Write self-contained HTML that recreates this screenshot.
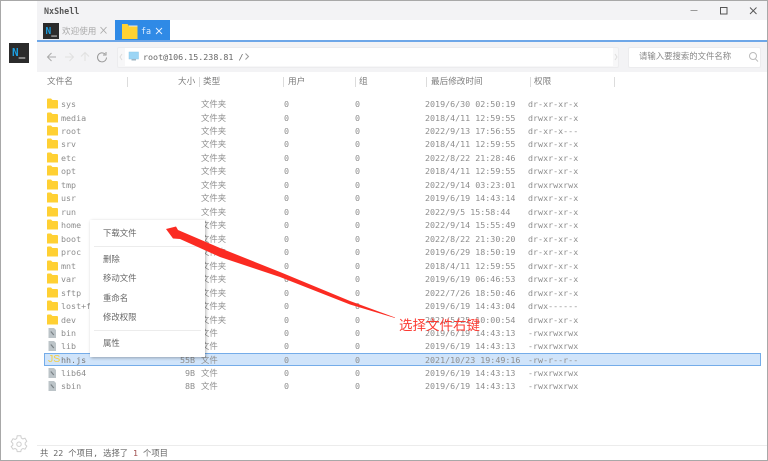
<!DOCTYPE html>
<html><head><meta charset="utf-8">
<style>
html,body{margin:0;padding:0;background:#fff}
#w{position:relative;width:768px;height:461px;overflow:hidden;background:#fff;font-family:"DejaVu Sans Mono","Liberation Mono","Noto Sans CJK SC",monospace;color:#8d8d8d;filter:blur(.3px)}
#w div,#w span.a{position:absolute;white-space:nowrap}
.t{font-size:8.35px;line-height:12px;height:12px}
.c{font-family:"Liberation Sans","Noto Sans CJK SC",sans-serif;font-size:8.4px;line-height:12px;height:12px;color:#8f8f8f}
.h{font-family:"Liberation Sans","Noto Sans CJK SC",sans-serif;font-size:8.6px;line-height:12px;color:#7d7d7d;top:75px}
.s{width:1px;height:10px;top:77px;background:#dcdcdc}
.m{font-family:"Liberation Sans","Noto Sans CJK SC",sans-serif;font-size:8.4px;line-height:12px;left:103px;color:#666}
svg{position:absolute;overflow:visible}
</style></head><body>
<div id="w">
<div style="left:37px;top:1px;width:730px;height:19px;background:#f3f3f5"></div>
<div style="left:44px;top:5px;font-size:8.4px;line-height:12px;color:#555;font-weight:bold">NxShell</div>
<!-- window buttons -->
<svg style="left:0;top:0" width="768" height="40"><path d="M690.5 10.5h7" stroke="#999" stroke-width="1"/><rect x="720.5" y="7.5" width="6.5" height="6.5" fill="none" stroke="#555"/><path d="M750 7.5l6.5 6.5M756.5 7.5l-6.5 6.5" stroke="#555" stroke-width=".9"/></svg>
<!-- tabs -->
<div style="left:37px;top:20px;width:78px;height:20px;background:#f3f3f5"></div>
<div style="left:43px;top:23px;width:16px;height:16px;background:#2b2b2b"></div>
<div style="left:45.5px;top:26px;font-size:9.5px;line-height:12px;color:#1d9fe0;font-weight:bold">N<span style="color:#ddd">_</span></div>
<div class="c" style="left:62px;top:25px;color:#aaa;font-size:8.6px">欢迎使用</div>
<svg style="left:0;top:0" width="768" height="45"><path d="M100.5 27l6 6.5M106.5 27l-6 6.5" stroke="#aaa" stroke-width=".9" fill="none"/></svg>
<div style="left:115px;top:20px;width:55px;height:20px;background:#2f8ae6"></div>
<svg style="left:121px;top:23px" width="17" height="17"><path d="M1 1h5.5l1.5 2h8.500v13H1z" fill="#ffd233"/><path d="M8 3h8.500" stroke="#e8e8e8" stroke-width="1"/></svg>
<div style="left:141px;top:25px;font-size:8.4px;line-height:12px;color:#dfeeff">fa</div>
<svg style="left:0;top:0" width="768" height="45"><path d="M156 28l6 6M162 28l-6 6" stroke="#e8f2ff" stroke-width=".9" fill="none"/></svg>
<div style="left:37px;top:40px;width:730px;height:2px;background:#6ea7e8"></div>
<!-- sidebar logo -->
<div style="left:9px;top:43px;width:20px;height:20px;background:#2b2b2b"></div>
<div style="left:12px;top:46px;font-size:11px;line-height:14px;color:#1d9fe0;font-weight:bold">N<span style="color:#ddd">_</span></div>
<!-- toolbar -->
<div style="left:37px;top:42px;width:730px;height:30px;background:#f3f3f5"></div>
<svg style="left:0;top:0" width="768" height="72"><g fill="none" stroke-width="1">
<path d="M56 57h-8M51.500 53l-4 4 4 4" stroke="#aaa"/>
<path d="M65 57h8M69.500 53l4 4-4 4" stroke="#e0e0e0"/>
<path d="M85 61v-8M81 56.500l4-4 4 4" stroke="#e0e0e0"/>
<path d="M105 54a4.500 4.500 0 1 0 1.500 3.500M106 52v3h-3" stroke="#999"/>
</g></svg>
<div style="left:117px;top:47px;width:500px;height:19px;background:#f7f7f8;border:1px solid #ececee;border-radius:2px"></div>
<div style="left:125px;top:48px;width:488px;height:18px;background:#fff"></div>
<svg style="left:0;top:0" width="768" height="72"><path d="M122 54l-2 3 2 3" fill="none" stroke="#ddd"/><path d="M615 54l2 3-2 3" fill="none" stroke="#ddd"/></svg>
<div style="left:628px;top:47px;width:131px;height:19px;background:#fff;border:1px solid #ececee;border-radius:2px"></div>
<svg style="left:0;top:0" width="768" height="72"><circle cx="753" cy="56" r="3.500" fill="none" stroke="#bbb"/><path d="M755.500 59l2.500 2.500" stroke="#bbb"/></svg>
<svg style="left:128px;top:51px" width="13" height="12"><rect x="1" y="1" width="9.500" height="7" fill="#9bd5f5" stroke="#8cc7e8" stroke-width=".5"/><rect x="3.500" y="8" width="4.500" height="1.500" fill="#9fb4c2"/></svg>
<div style="left:143px;top:51px;font-size:8.35px;line-height:12px;color:#666">root@106.15.238.81 /</div>
<svg style="left:0;top:0" width="768" height="72"><path d="M245.500 53.500l3 3-3 3" fill="none" stroke="#999"/></svg>
<div class="c" style="left:639px;top:50px;font-size:8.4px;color:#888">请输入要搜索的文件名称</div>
<!-- header -->
<div class="h" style="left:47px">文件名</div>
<div class="s" style="left:127px"></div>
<div class="h" style="left:178px">大小</div>
<div class="s" style="left:199px"></div>
<div class="h" style="left:203px">类型</div>
<div class="s" style="left:283px"></div>
<div class="h" style="left:288px">用户</div>
<div class="s" style="left:355px"></div>
<div class="h" style="left:359px">组</div>
<div class="s" style="left:426px"></div>
<div class="h" style="left:431px">最后修改时间</div>
<div class="s" style="left:530px"></div>
<div class="h" style="left:534px">权限</div>
<div class="s" style="left:614px"></div>
<!-- selected -->
<div style="left:44px;top:353px;width:715px;height:11px;background:#d0e4fa;border:1px solid #74ace9"></div>
<!-- rows -->
<svg style="left:47px;top:98px" width="13" height="12"><use href="#f"/></svg>
<div class="t" style="left:61px;top:98px">sys</div><div class="c" style="left:201px;top:98px">文件夹</div><div class="t" style="left:284px;top:98px">0</div><div class="t" style="left:355px;top:98px">0</div><div class="t" style="left:425px;top:98px">2019/6/30 02:50:19</div><div class="t" style="left:528px;top:98px">dr-xr-xr-x</div>
<svg style="left:47px;top:111.500px" width="13" height="12"><use href="#f"/></svg>
<div class="t" style="left:61px;top:111.500px">media</div><div class="c" style="left:201px;top:111.500px">文件夹</div><div class="t" style="left:284px;top:111.500px">0</div><div class="t" style="left:355px;top:111.500px">0</div><div class="t" style="left:425px;top:111.500px">2018/4/11 12:59:55</div><div class="t" style="left:528px;top:111.500px">drwxr-xr-x</div>
<svg style="left:47px;top:125px" width="13" height="12"><use href="#f"/></svg>
<div class="t" style="left:61px;top:125px">root</div><div class="c" style="left:201px;top:125px">文件夹</div><div class="t" style="left:284px;top:125px">0</div><div class="t" style="left:355px;top:125px">0</div><div class="t" style="left:425px;top:125px">2022/9/13 17:56:55</div><div class="t" style="left:528px;top:125px">dr-xr-x---</div>
<svg style="left:47px;top:138px" width="13" height="12"><use href="#f"/></svg>
<div class="t" style="left:61px;top:138px">srv</div><div class="c" style="left:201px;top:138px">文件夹</div><div class="t" style="left:284px;top:138px">0</div><div class="t" style="left:355px;top:138px">0</div><div class="t" style="left:425px;top:138px">2018/4/11 12:59:55</div><div class="t" style="left:528px;top:138px">drwxr-xr-x</div>
<svg style="left:47px;top:152px" width="13" height="12"><use href="#f"/></svg>
<div class="t" style="left:61px;top:152px">etc</div><div class="c" style="left:201px;top:152px">文件夹</div><div class="t" style="left:284px;top:152px">0</div><div class="t" style="left:355px;top:152px">0</div><div class="t" style="left:425px;top:152px">2022/8/22 21:28:46</div><div class="t" style="left:528px;top:152px">drwxr-xr-x</div>
<svg style="left:47px;top:165px" width="13" height="12"><use href="#f"/></svg>
<div class="t" style="left:61px;top:165px">opt</div><div class="c" style="left:201px;top:165px">文件夹</div><div class="t" style="left:284px;top:165px">0</div><div class="t" style="left:355px;top:165px">0</div><div class="t" style="left:425px;top:165px">2018/4/11 12:59:55</div><div class="t" style="left:528px;top:165px">drwxr-xr-x</div>
<svg style="left:47px;top:179px" width="13" height="12"><use href="#f"/></svg>
<div class="t" style="left:61px;top:179px">tmp</div><div class="c" style="left:201px;top:179px">文件夹</div><div class="t" style="left:284px;top:179px">0</div><div class="t" style="left:355px;top:179px">0</div><div class="t" style="left:425px;top:179px">2022/9/14 03:23:01</div><div class="t" style="left:528px;top:179px">drwxrwxrwx</div>
<svg style="left:47px;top:192px" width="13" height="12"><use href="#f"/></svg>
<div class="t" style="left:61px;top:192px">usr</div><div class="c" style="left:201px;top:192px">文件夹</div><div class="t" style="left:284px;top:192px">0</div><div class="t" style="left:355px;top:192px">0</div><div class="t" style="left:425px;top:192px">2019/6/19 14:43:14</div><div class="t" style="left:528px;top:192px">drwxr-xr-x</div>
<svg style="left:47px;top:206px" width="13" height="12"><use href="#f"/></svg>
<div class="t" style="left:61px;top:206px">run</div><div class="c" style="left:201px;top:206px">文件夹</div><div class="t" style="left:284px;top:206px">0</div><div class="t" style="left:355px;top:206px">0</div><div class="t" style="left:425px;top:206px">2022/9/5 15:58:44</div><div class="t" style="left:528px;top:206px">drwxr-xr-x</div>
<svg style="left:47px;top:219px" width="13" height="12"><use href="#f"/></svg>
<div class="t" style="left:61px;top:219px">home</div><div class="c" style="left:201px;top:219px">文件夹</div><div class="t" style="left:284px;top:219px">0</div><div class="t" style="left:355px;top:219px">0</div><div class="t" style="left:425px;top:219px">2022/9/14 15:55:49</div><div class="t" style="left:528px;top:219px">drwxr-xr-x</div>
<svg style="left:47px;top:233px" width="13" height="12"><use href="#f"/></svg>
<div class="t" style="left:61px;top:233px">boot</div><div class="c" style="left:201px;top:233px">文件夹</div><div class="t" style="left:284px;top:233px">0</div><div class="t" style="left:355px;top:233px">0</div><div class="t" style="left:425px;top:233px">2022/8/22 21:30:20</div><div class="t" style="left:528px;top:233px">dr-xr-xr-x</div>
<svg style="left:47px;top:246px" width="13" height="12"><use href="#f"/></svg>
<div class="t" style="left:61px;top:246px">proc</div><div class="c" style="left:201px;top:246px">文件夹</div><div class="t" style="left:284px;top:246px">0</div><div class="t" style="left:355px;top:246px">0</div><div class="t" style="left:425px;top:246px">2019/6/29 18:50:19</div><div class="t" style="left:528px;top:246px">dr-xr-xr-x</div>
<svg style="left:47px;top:260px" width="13" height="12"><use href="#f"/></svg>
<div class="t" style="left:61px;top:260px">mnt</div><div class="c" style="left:201px;top:260px">文件夹</div><div class="t" style="left:284px;top:260px">0</div><div class="t" style="left:355px;top:260px">0</div><div class="t" style="left:425px;top:260px">2018/4/11 12:59:55</div><div class="t" style="left:528px;top:260px">drwxr-xr-x</div>
<svg style="left:47px;top:273px" width="13" height="12"><use href="#f"/></svg>
<div class="t" style="left:61px;top:273px">var</div><div class="c" style="left:201px;top:273px">文件夹</div><div class="t" style="left:284px;top:273px">0</div><div class="t" style="left:355px;top:273px">0</div><div class="t" style="left:425px;top:273px">2019/6/19 06:46:53</div><div class="t" style="left:528px;top:273px">drwxr-xr-x</div>
<svg style="left:47px;top:286.500px" width="13" height="12"><use href="#f"/></svg>
<div class="t" style="left:61px;top:286.500px">sftp</div><div class="c" style="left:201px;top:286.500px">文件夹</div><div class="t" style="left:284px;top:286.500px">0</div><div class="t" style="left:355px;top:286.500px">0</div><div class="t" style="left:425px;top:286.500px">2022/7/26 18:50:46</div><div class="t" style="left:528px;top:286.500px">drwxr-xr-x</div>
<svg style="left:47px;top:300px" width="13" height="12"><use href="#f"/></svg>
<div class="t" style="left:61px;top:300px">lost+found</div><div class="c" style="left:201px;top:300px">文件夹</div><div class="t" style="left:284px;top:300px">0</div><div class="t" style="left:355px;top:300px">0</div><div class="t" style="left:425px;top:300px">2019/6/19 14:43:04</div><div class="t" style="left:528px;top:300px">drwx------</div>
<svg style="left:47px;top:313.500px" width="13" height="12"><use href="#f"/></svg>
<div class="t" style="left:61px;top:313.500px">dev</div><div class="c" style="left:201px;top:313.500px">文件夹</div><div class="t" style="left:284px;top:313.500px">0</div><div class="t" style="left:355px;top:313.500px">0</div><div class="t" style="left:425px;top:313.500px">2021/5/25 10:00:54</div><div class="t" style="left:528px;top:313.500px">drwxr-xr-x</div>
<svg style="left:47px;top:327px" width="13" height="12"><use href="#g"/></svg>
<div class="t" style="left:61px;top:327px">bin</div><div class="c" style="left:201px;top:327px">文件</div><div class="t" style="left:284px;top:327px">0</div><div class="t" style="left:355px;top:327px">0</div><div class="t" style="left:425px;top:327px">2019/6/19 14:43:13</div><div class="t" style="left:528px;top:327px">-rwxrwxrwx</div>
<svg style="left:47px;top:340px" width="13" height="12"><use href="#g"/></svg>
<div class="t" style="left:61px;top:340px">lib</div><div class="c" style="left:201px;top:340px">文件</div><div class="t" style="left:284px;top:340px">0</div><div class="t" style="left:355px;top:340px">0</div><div class="t" style="left:425px;top:340px">2019/6/19 14:43:13</div><div class="t" style="left:528px;top:340px">-rwxrwxrwx</div>
<div style="left:48px;top:354px;font-family:'Liberation Sans',sans-serif;font-size:10.500px;line-height:11px;height:11px;color:#f6cf3c">JS</div>
<div class="t" style="left:61px;top:353.500px;color:#777">hh.js</div><div class="t" style="left:180px;top:353.500px">55B</div><div class="c" style="left:201px;top:353.500px">文件</div><div class="t" style="left:284px;top:353.500px">0</div><div class="t" style="left:355px;top:353.500px">0</div><div class="t" style="left:425px;top:353.500px">2021/10/23 19:49:16</div><div class="t" style="left:528px;top:353.500px">-rw-r--r--</div>
<svg style="left:47px;top:367px" width="13" height="12"><use href="#g"/></svg>
<div class="t" style="left:61px;top:367px">lib64</div><div class="t" style="left:185px;top:367px">9B</div><div class="c" style="left:201px;top:367px">文件</div><div class="t" style="left:284px;top:367px">0</div><div class="t" style="left:355px;top:367px">0</div><div class="t" style="left:425px;top:367px">2019/6/19 14:43:13</div><div class="t" style="left:528px;top:367px">-rwxrwxrwx</div>
<svg style="left:47px;top:380px" width="13" height="12"><use href="#g"/></svg>
<div class="t" style="left:61px;top:380px">sbin</div><div class="t" style="left:185px;top:380px">8B</div><div class="c" style="left:201px;top:380px">文件</div><div class="t" style="left:284px;top:380px">0</div><div class="t" style="left:355px;top:380px">0</div><div class="t" style="left:425px;top:380px">2019/6/19 14:43:13</div><div class="t" style="left:528px;top:380px">-rwxrwxrwx</div>
<svg width="0" height="0" style="left:0;top:0"><defs>
<g id="f"><path d="M0 1.500q0-1 1-1h3l1.500 1.500h4.500q1 0 1 1v7.500H0z" fill="#ffd033"/></g>
<g id="g"><path d="M1.500 1h5.500l2 2v8H1.500z" fill="#bcc4c8"/><path d="M3.800 4.500l3 3.500" stroke="#7a8287" stroke-width="1.200"/></g>
</defs></svg>
<!-- menu -->
<div style="left:90px;top:220px;width:115px;height:137px;background:#fff;box-shadow:1px 1px 3px rgba(0,0,0,.3)"></div>
<div style="left:94px;top:246px;width:107px;height:1px;background:#ececec"></div>
<div style="left:94px;top:330px;width:107px;height:1px;background:#ececec"></div>
<div class="m" style="top:227px">下载文件</div>
<div class="m" style="top:253px">删除</div>
<div class="m" style="top:272px">移动文件</div>
<div class="m" style="top:292px">重命名</div>
<div class="m" style="top:311px">修改权限</div>
<div class="m" style="top:337px">属性</div>
<!-- arrow -->
<svg style="left:0;top:0" width="768" height="461"><path d="M166 229L176 226.500L178 230L220 248L280 272L350 301L395 317.500L395 318L350 304.500L280 277L220 257L180 239L173 238.500Z" fill="#fb2b22"/></svg>
<div style="left:399px;top:317px;font-family:'Liberation Sans','Noto Sans CJK SC',sans-serif;font-size:13.500px;line-height:17px;color:#fb3a32">选择文件右键</div>
<!-- bottom -->
<div style="left:37px;top:445px;width:730px;height:1px;background:#ececec"></div>
<svg style="left:10px;top:435px" width="18" height="18"><path d="M7.200 .8h3.600l.5 2.200 1.600.9 2.100-.7 1.800 3.100-1.600 1.500v1.800l1.600 1.500-1.800 3.100-2.100-.7-1.600.9-.5 2.200H7.200l-.5-2.200-1.600-.9-2.100.7L1.200 11.600l1.600-1.500V8.300L1.200 6.800 3 3.700l2.100.7 1.600-.9z" fill="none" stroke="#cfcfcf" stroke-width="1"/><circle cx="9" cy="9.200" r="2.200" fill="none" stroke="#cfcfcf"/></svg>
<div style="left:40px;top:447px;font-size:8.300px;line-height:12px;color:#666;font-family:'DejaVu Sans Mono','Noto Sans CJK SC',monospace">共 22 个项目, 选择了 <span style="color:#a05050">1</span> 个项目</div>
<!-- window border -->
<div style="left:0;top:0;width:766px;height:459px;border:1px solid #a8a8a8"></div>
</div>
</body></html>
